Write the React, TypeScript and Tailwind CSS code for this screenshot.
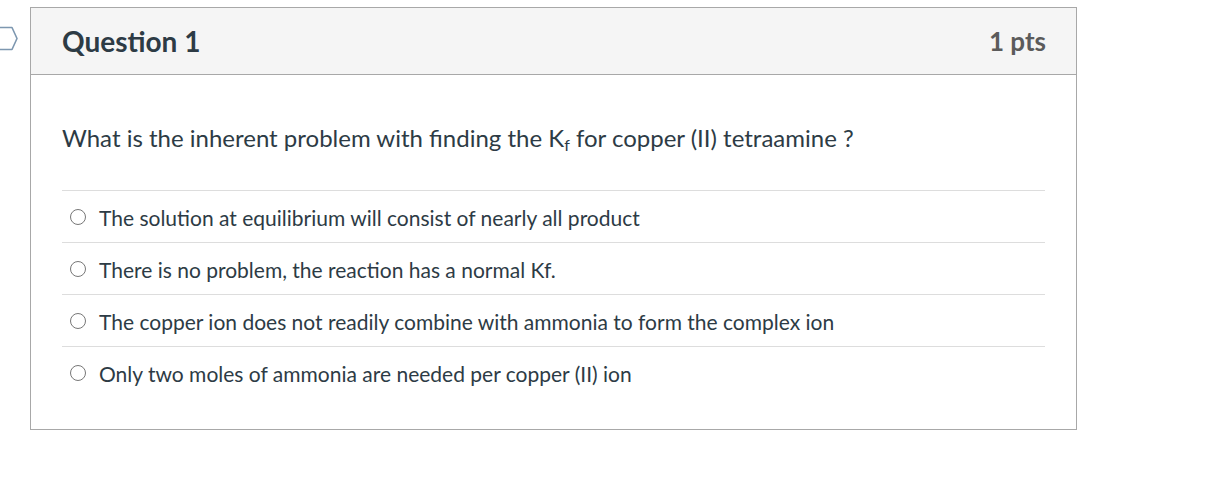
import React from "react";

const answers = [
  "The solution at equilibrium will consist of nearly all product",
  "There is no problem, the reaction has a normal Kf.",
  "The copper ion does not readily combine with ammonia to form the complex ion",
  "Only two moles of ammonia are needed per copper (II) ion",
];

export default function App() {
  return (
    <div className="bg-white w-[1214px] h-[480px] pt-[7px] flex" style={{ fontFamily: "Lato, 'Noto Sans', sans-serif" }}>
      <div className="w-[30px] relative">
        <svg className="absolute left-0 top-[19px]" width="22" height="26" viewBox="0 0 22 26">
          <path d="M-4 1.5 H12 L17 12.5 L12 23.5 H-4" fill="none" stroke="#7d97b0" strokeWidth="1.6" strokeLinejoin="round" />
        </svg>
      </div>
      <div className="w-[1047px] h-[423px] border border-[#a8a8a8] flex flex-col">
        <div className="h-[67px] bg-[#f5f5f5] border-b border-[#a8a8a8] flex items-center justify-between pl-[31px] pr-[30px]">
          <div className="text-[28px] font-bold text-[#2d3b45] leading-none">Question 1</div>
          <div className="text-[26px] font-bold text-[#5b5b5b] leading-none">1 pts</div>
        </div>
        <div className="px-[31px] pt-[46px]">
          <div className="text-[24px] leading-[33px] text-[#2d3b45]">
            What is the inherent problem with finding the K<sub className="text-[16px] align-baseline relative top-[4px]">f</sub> for copper (II) tetraamine ?
          </div>
          <div className="mt-[36px]">
            {answers.map((a) => (
              <div key={a} className="h-[52px] border-t border-[#dddddd] flex items-center">
                <span className="ml-[8px] w-[16px] h-[16px] rounded-full border border-[#777] mr-[13px] shrink-0" />
                <span className="text-[21px] text-[#2d3b45] relative top-[1px]">{a}</span>
              </div>
            ))}
          </div>
        </div>
      </div>
    </div>
  );
}
